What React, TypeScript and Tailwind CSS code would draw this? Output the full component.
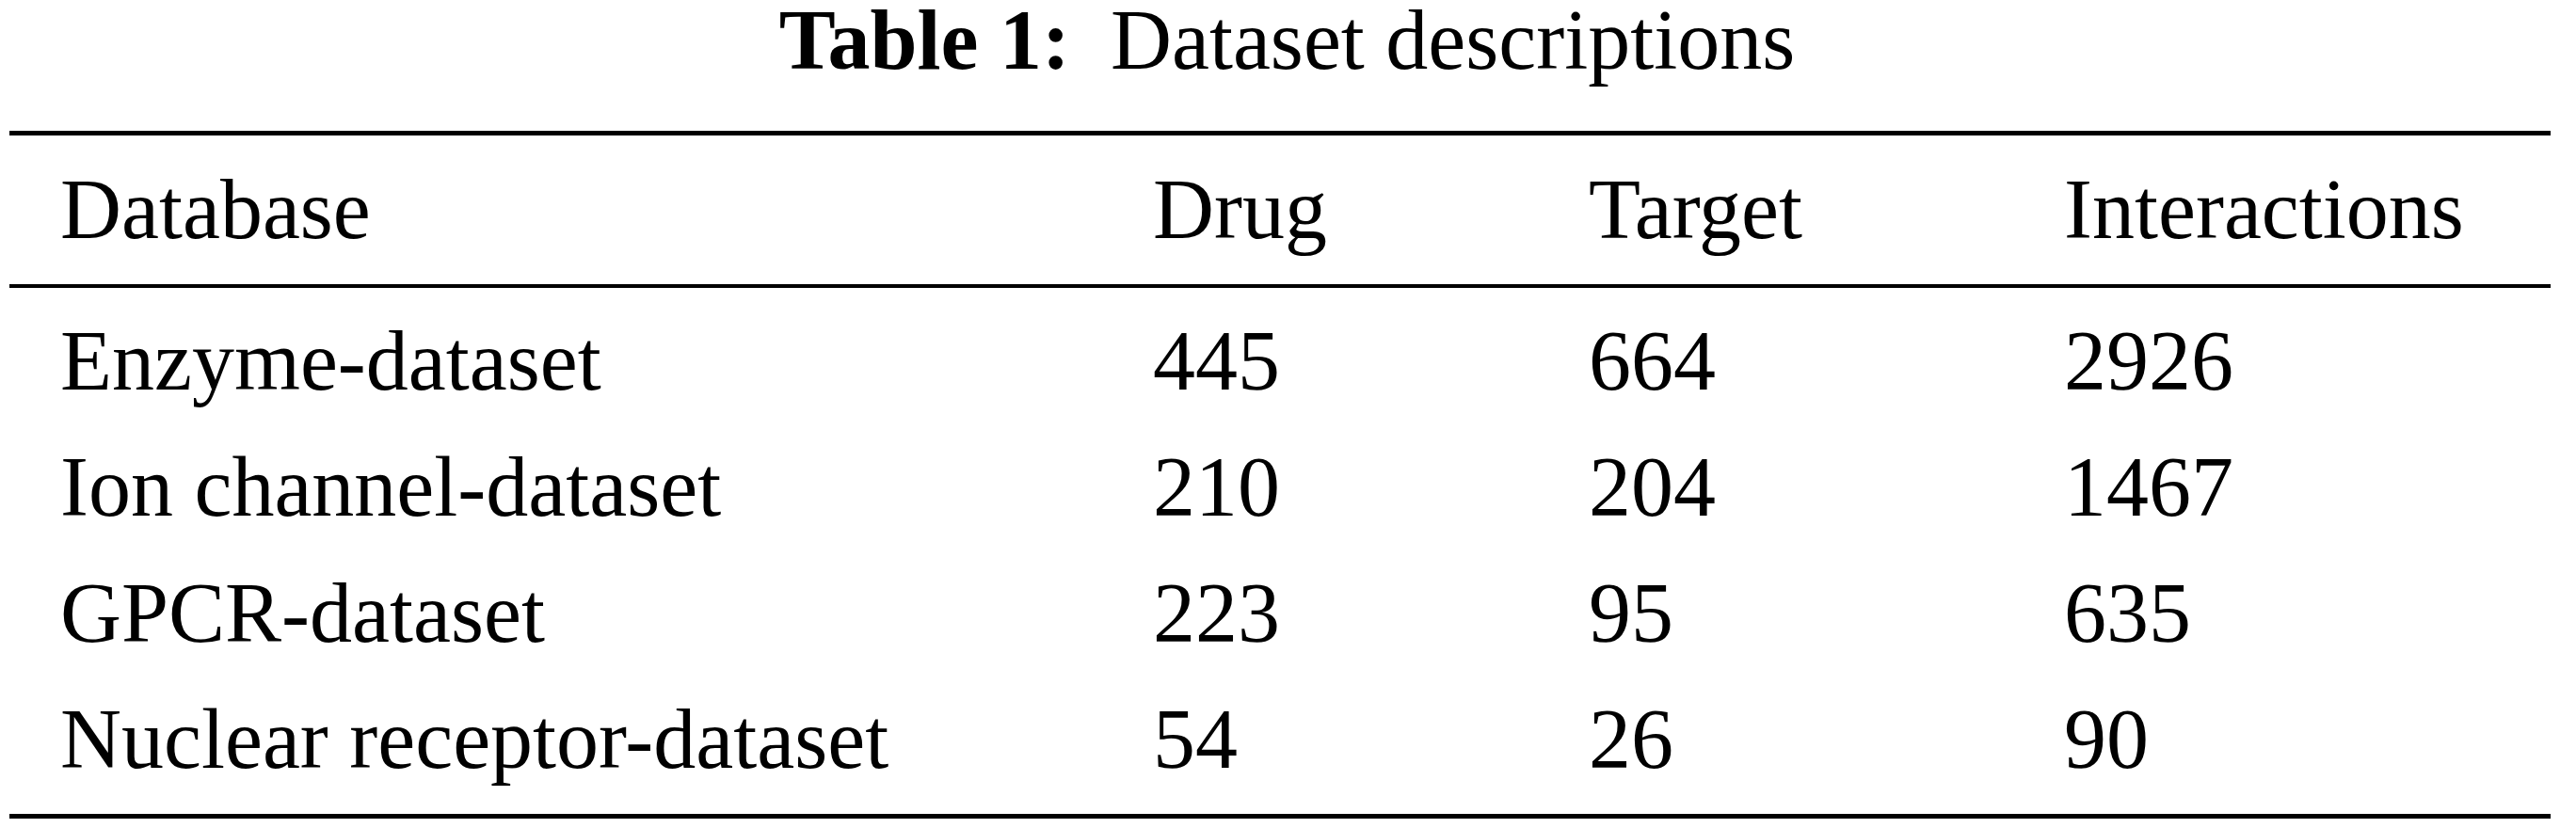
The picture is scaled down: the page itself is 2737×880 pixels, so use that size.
const rows = [
  { name: 'Enzyme-dataset', drug: '445', target: '664', interactions: '2926' },
  { name: 'Ion channel-dataset', drug: '210', target: '204', interactions: '1467' },
  { name: 'GPCR-dataset', drug: '223', target: '95', interactions: '635' },
  { name: 'Nuclear receptor-dataset', drug: '54', target: '26', interactions: '90' },
]

const cols = 'grid grid-cols-[1215px_463px_505px_1fr]'

export default function App() {
  return (
    <div className="w-[2737px] h-[880px] bg-white text-black font-['Liberation_Serif','Times_New_Roman',serif] text-[90px]">
      <div className="flex justify-center pr-[2px] leading-[86px] whitespace-nowrap">
        <span className="font-bold">Table 1:</span>
        <span className="ml-[43px]">Dataset descriptions</span>
      </div>

      <div className="ml-[10px] w-[2700px] mt-[53px]">
        <div className="h-[5px] bg-black" />
        <div className={`${cols} leading-[158px] h-[158px]`}>
          <div className="pl-[54px]">Database</div>
          <div>Drug</div>
          <div>Target</div>
          <div>Interactions</div>
        </div>
        <div className="h-[4px] bg-black" />
        <div className="pt-[11px] pb-[12px]">
          {rows.map((r) => (
            <div key={r.name} className={`${cols} leading-[134px] h-[134px] whitespace-nowrap`}>
              <div className="pl-[54px]">{r.name}</div>
              <div>{r.drug}</div>
              <div>{r.target}</div>
              <div>{r.interactions}</div>
            </div>
          ))}
        </div>
        <div className="h-[5px] bg-black" />
      </div>
    </div>
  )
}
